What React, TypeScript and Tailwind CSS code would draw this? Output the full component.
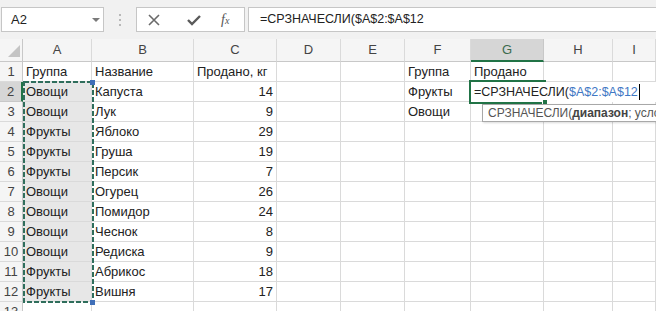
import React from "react";

const colW = [69, 102, 83, 64, 64, 66, 73, 69, 43];
const letters = ["A", "B", "C", "D", "E", "F", "G", "H", "I"];

type Row = { a?: string; b?: string; c?: string; f?: string; g?: string };
const rows: Row[] = [
  { a: "Группа", b: "Название", c: "Продано, кг", f: "Группа", g: "Продано" },
  { a: "Овощи", b: "Капуста", c: "14", f: "Фрукты" },
  { a: "Овощи", b: "Лук", c: "9", f: "Овощи" },
  { a: "Фрукты", b: "Яблоко", c: "29" },
  { a: "Фрукты", b: "Груша", c: "19" },
  { a: "Фрукты", b: "Персик", c: "7" },
  { a: "Овощи", b: "Огурец", c: "26" },
  { a: "Овощи", b: "Помидор", c: "24" },
  { a: "Овощи", b: "Чеснок", c: "8" },
  { a: "Овощи", b: "Редиска", c: "9" },
  { a: "Фрукты", b: "Абрикос", c: "18" },
  { a: "Фрукты", b: "Вишня", c: "17" },
  {},
];

export default function App() {
  return (
    <div
      className="relative w-[656px] h-[311px] overflow-hidden bg-white text-[#222]"
      style={{ fontFamily: '"Liberation Sans", Arial, sans-serif' }}
    >
      {/* Toolbar */}
      <div className="h-[39px] bg-[#f1f1f1] flex items-center pl-[1px]">
        <div className="relative h-[25px] w-[103px] bg-white border border-[#c6c6c6] flex items-center pl-[9px] text-[13px]">
          A2
          <div className="absolute left-[90px] top-[10px] w-0 h-0 border-l-[4px] border-r-[4px] border-t-[4px] border-l-transparent border-r-transparent border-t-[#7a7a7a]" />
        </div>
        <div className="w-[32px] flex flex-col items-center gap-[3px]">
          <div className="w-[2px] h-[2px] bg-[#b8b8b8]" />
          <div className="w-[2px] h-[2px] bg-[#b8b8b8]" />
          <div className="w-[2px] h-[2px] bg-[#b8b8b8]" />
        </div>
        <div className="h-[25px] w-[109px] bg-white border border-[#c6c6c6] flex items-center">
          <svg width="12" height="12" viewBox="0 0 12 12" className="ml-[11px]">
            <path d="M1 1 L11 11 M11 1 L1 11" stroke="#6a6a6a" strokeWidth="1.6" />
          </svg>
          <svg width="14" height="12" viewBox="0 0 14 12" className="ml-[27px]">
            <path d="M1 6 L5 10 L13 2" stroke="#5a5a5a" strokeWidth="2.4" fill="none" />
          </svg>
          <span
            className="ml-[20px] text-[14px] italic text-[#555]"
            style={{ fontFamily: '"Liberation Serif", serif' }}
          >
            f<span className="text-[10px]">x</span>
          </span>
        </div>
        <div className="ml-[3px] h-[25px] flex-1 bg-white border border-[#c6c6c6] border-r-0 flex items-center pl-[11px] text-[12.5px]">
          =СРЗНАЧЕСЛИ($A$2:$A$12
        </div>
      </div>

      {/* Column headers */}
      <div className="flex h-[23px] bg-[#f5f5f5] text-[13px] text-[#444]">
        <div className="relative w-[23px] border-r border-b border-[#c8c8c8]">
          <div className="absolute left-[8px] top-[6px] w-0 h-0 border-b-[12px] border-l-[12px] border-b-[#c4c4c4] border-l-transparent" />
        </div>
        {letters.map((l, i) => (
          <div
            key={l}
            className={
              l === "G"
                ? "flex items-center justify-center border-r border-[#c8c8c8] border-b-2 border-b-[#217346] bg-[#d6d6d6] text-[#3b6b4e]"
                : "flex items-center justify-center border-r border-b border-[#c8c8c8] border-r-[#dadada]"
            }
            style={{ width: colW[i] }}
          >
            {l}
          </div>
        ))}
      </div>

      {/* Rows */}
      {rows.map((r, ri) => {
        const n = ri + 1;
        const cells = [r.a, r.b, r.c, undefined, undefined, r.f, r.g, undefined, undefined];
        return (
          <div key={n} className="flex h-[20px] text-[13px]">
            <div
              className={
                n === 2
                  ? "w-[23px] flex items-center justify-center bg-[#d6d6d6] border-b border-[#c8c8c8] border-r-2 border-r-[#217346] text-[#444]"
                  : "w-[23px] flex items-center justify-center bg-[#f5f5f5] border-b border-r border-[#c8c8c8] border-b-[#dadada] text-[#444]"
              }
            >
              {n}
            </div>
            {cells.map((v, ci) => (
              <div
                key={ci}
                className={
                  (ci === 0 && n >= 2 && n <= 12 ? "bg-[#e7e7e7] " : "") +
                  (ci === 2 && n > 1 ? "justify-end pr-[3px] " : "pl-[3px] ") +
                  "flex items-center border-r border-b border-[#dadada] whitespace-nowrap overflow-visible"
                }
                style={{ width: colW[ci] }}
              >
                {v}
              </div>
            ))}
          </div>
        );
      })}

      {/* Reference range marching ants */}
      <svg className="absolute left-[23px] top-[81px]" width="72" height="223">
        <rect x="1" y="1" width="69" height="220" fill="none" stroke="#2f6e5c" strokeWidth="2" strokeDasharray="5 2" />
      </svg>
      <div className="absolute left-[90px] top-[80px] w-[5px] h-[5px] bg-[#3f6fb8]" />
      <div className="absolute left-[90px] top-[300px] w-[5px] h-[5px] bg-[#3f6fb8]" />

      {/* Edit cell */}
      <div className="absolute left-[471px] top-[82px] w-[190px] h-[20px] bg-white flex items-center pl-[3px] text-[12.5px] whitespace-nowrap">
        <span>=СРЗНАЧЕСЛИ(</span>
        <span className="text-[#3f78c4]">$A$2:$A$12</span>
        <span className="ml-[1px] w-[1px] h-[16px] bg-black" />
      </div>
      <div className="absolute left-[469px] top-[80px] w-[77px] h-[24px] border-2 border-r-0 border-[#217346]" />
      <div className="absolute left-[542px] top-[99px] w-[6px] h-[6px] bg-[#217346] border border-white" />

      {/* Tooltip */}
      <div className="absolute left-[482px] top-[104px] h-[18px] w-[200px] bg-white border border-[#a8a8a8] shadow-[1px_1px_2px_rgba(0,0,0,0.15)] flex items-center pl-[5px] text-[12px] text-[#555] whitespace-nowrap">
        СРЗНАЧЕСЛИ(<b className="text-[#444]">диапазон</b>; условие
      </div>
    </div>
  );
}
